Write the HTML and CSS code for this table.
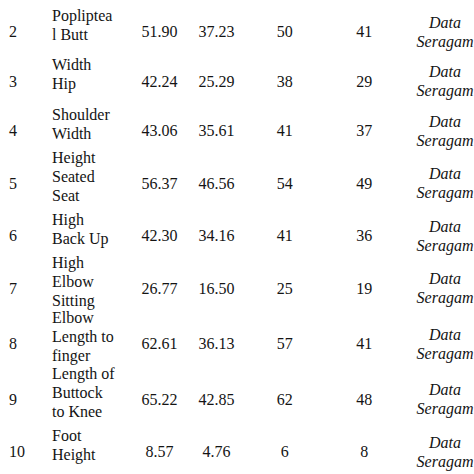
FILE: index.html
```html
<!DOCTYPE html>
<html lang="en">
<head>
<meta charset="utf-8">
<title>Anthropometric data</title>
<link rel="stylesheet" href="styles.css">
</head>
<body>
<div class="table">
  <div class="row two">
    <div class="cell num">2</div>
    <div class="cell name">Poplipteal Butt</div>
    <div class="cell val">51.90</div>
    <div class="cell val">37.23</div>
    <div class="cell val wide">50</div>
    <div class="cell val wide">41</div>
    <div class="cell src">Data Seragam</div>
  </div>
  <div class="row two">
    <div class="cell num">3</div>
    <div class="cell name">Width Hip</div>
    <div class="cell val">42.24</div>
    <div class="cell val">25.29</div>
    <div class="cell val wide">38</div>
    <div class="cell val wide">29</div>
    <div class="cell src">Data Seragam</div>
  </div>
  <div class="row two">
    <div class="cell num">4</div>
    <div class="cell name">Shoulder Width</div>
    <div class="cell val">43.06</div>
    <div class="cell val">35.61</div>
    <div class="cell val wide">41</div>
    <div class="cell val wide">37</div>
    <div class="cell src">Data Seragam</div>
  </div>
  <div class="row three">
    <div class="cell num">5</div>
    <div class="cell name">Height Seated Seat</div>
    <div class="cell val">56.37</div>
    <div class="cell val">46.56</div>
    <div class="cell val wide">54</div>
    <div class="cell val wide">49</div>
    <div class="cell src">Data Seragam</div>
  </div>
  <div class="row two">
    <div class="cell num">6</div>
    <div class="cell name">High Back Up</div>
    <div class="cell val">42.30</div>
    <div class="cell val">34.16</div>
    <div class="cell val wide">41</div>
    <div class="cell val wide">36</div>
    <div class="cell src">Data Seragam</div>
  </div>
  <div class="row three">
    <div class="cell num">7</div>
    <div class="cell name">High Elbow Sitting</div>
    <div class="cell val">26.77</div>
    <div class="cell val">16.50</div>
    <div class="cell val wide">25</div>
    <div class="cell val wide">19</div>
    <div class="cell src">Data Seragam</div>
  </div>
  <div class="row three">
    <div class="cell num">8</div>
    <div class="cell name">Elbow Length to finger</div>
    <div class="cell val">62.61</div>
    <div class="cell val">36.13</div>
    <div class="cell val wide">57</div>
    <div class="cell val wide">41</div>
    <div class="cell src">Data Seragam</div>
  </div>
  <div class="row three">
    <div class="cell num">9</div>
    <div class="cell name">Length of Buttock to Knee</div>
    <div class="cell val">65.22</div>
    <div class="cell val">42.85</div>
    <div class="cell val wide">62</div>
    <div class="cell val wide">48</div>
    <div class="cell src">Data Seragam</div>
  </div>
  <div class="row two">
    <div class="cell num">10</div>
    <div class="cell name">Foot Height</div>
    <div class="cell val">8.57</div>
    <div class="cell val">4.76</div>
    <div class="cell val wide">6</div>
    <div class="cell val wide">8</div>
    <div class="cell src">Data Seragam</div>
  </div>
</div>
</body>
</html>
```
FILE: styles.css
```css
html, body {
  margin: 0;
  padding: 0;
  background: #ffffff;
  overflow: hidden;
}

body {
  width: 474px;
  height: 474px;
  font-family: "Liberation Serif", "Times New Roman", serif;
  font-size: 16px;
  line-height: 19px;
  color: #141414;
}

.table {
  padding-top: 7px;
}

.row {
  display: flex;
  align-items: center;
}

.row.two {
  height: 49.5px;
}

.row.three {
  height: 55.5px;
}

.cell {
  flex: none;
}

.num {
  width: 43px;
  padding-left: 9px;
}

.name {
  width: 64px;
  padding-right: 15px;
  padding-bottom: 14px;
  overflow-wrap: anywhere;
}

.val {
  width: 57px;
  text-align: center;
}

.val.wide {
  width: 79.5px;
}

.src {
  width: 82px;
  text-align: center;
  font-style: italic;
}
```
